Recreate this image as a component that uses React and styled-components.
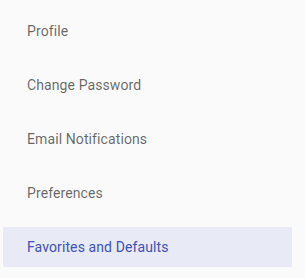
import React from "react";
import styled, { createGlobalStyle } from "styled-components";

const GlobalStyle = createGlobalStyle`
  body {
    margin: 0;
    background: #fafafa;
    font-family: Roboto, "Liberation Sans", sans-serif;
  }
`;

const Nav = styled.nav`
  width: 289px;
  padding: 11px 0 0 3px;
  display: flex;
  flex-direction: column;
  gap: 14px;
`;

const NavItem = styled.div`
  height: 40px;
  display: flex;
  align-items: center;
  padding-left: 24px;
  font-size: 14px;
  letter-spacing: 0.1px;
  color: ${(p) => (p.$active ? "#3f51b5" : "rgba(0, 0, 0, 0.6)")};
  background: ${(p) => (p.$active ? "#e8eaf6" : "transparent")};
  cursor: pointer;
`;

const items = [
  "Profile",
  "Change Password",
  "Email Notifications",
  "Preferences",
  "Favorites and Defaults",
];

const App = () => {
  return (
    <>
      <GlobalStyle />
      <Nav>
        {items.map((label, i) => (
          <NavItem key={label} $active={i === items.length - 1}>
            {label}
          </NavItem>
        ))}
      </Nav>
    </>
  );
};

export default App;
